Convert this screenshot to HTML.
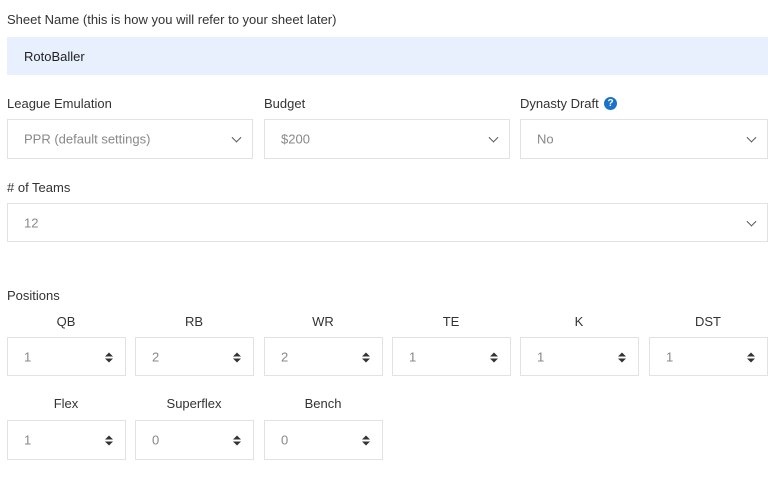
<!DOCTYPE html>
<html><head><style>
body{margin:0;width:768px;height:487px;background:#fff;font-family:"Liberation Sans",sans-serif;font-size:13px;color:#333;position:relative;overflow:hidden}
.a{position:absolute}
.lbl{position:absolute;font-size:13px;color:#333;line-height:15px}
.box{position:absolute;border:1px solid #e2e2e2;box-sizing:border-box;background:#fff;color:#888;font-size:13px}
.box span{position:absolute;left:16px;top:50%;transform:translateY(-50%)}
.chev{position:absolute;right:12px;top:50%;width:6px;height:6px;border-right:1.5px solid #555;border-bottom:1.5px solid #555;transform:translateY(-70%) rotate(45deg)}
.sp{position:absolute;right:12px;top:50%;transform:translateY(-50%);width:8px;height:11px}
.c{text-align:center;width:118px}
</style></head><body>
<div class="lbl" style="left:7px;top:12px">Sheet Name (this is how you will refer to your sheet later)</div>
<div class="a" style="left:7px;top:37px;width:761px;height:38px;background:#e8f0fe"><span class="a" style="left:17px;top:12px;color:#222">RotoBaller</span></div>

<div class="lbl" style="left:7px;top:96px">League Emulation</div>
<div class="lbl" style="left:264px;top:96px">Budget</div>
<div class="lbl" style="left:520px;top:96px;width:100px">Dynasty Draft <span style="position:absolute;left:84px;top:1px;width:13px;height:13px;border-radius:50%;background:#1a73c8;color:#fff;font-size:10px;font-weight:bold;text-align:center;line-height:13px">?</span></div>
<div class="box" style="left:7px;top:119px;width:246px;height:40px"><span>PPR (default settings)</span><i class="chev"></i></div>
<div class="box" style="left:264px;top:119px;width:246px;height:40px"><span>$200</span><i class="chev"></i></div>
<div class="box" style="left:520px;top:119px;width:248px;height:40px"><span>No</span><i class="chev"></i></div>

<div class="lbl" style="left:7px;top:180px"># of Teams</div>
<div class="box" style="left:7px;top:203px;width:761px;height:39px"><span>12</span><i class="chev"></i></div>

<div class="lbl" style="left:7px;top:288px">Positions</div>

<div class="lbl c" style="left:7px;top:314px">QB</div>
<div class="lbl c" style="left:135px;top:314px">RB</div>
<div class="lbl c" style="left:264px;top:314px">WR</div>
<div class="lbl c" style="left:392px;top:314px">TE</div>
<div class="lbl c" style="left:520px;top:314px">K</div>
<div class="lbl c" style="left:649px;top:314px">DST</div>

<div class="lbl c" style="left:7px;top:396px">Flex</div>
<div class="lbl c" style="left:135px;top:396px">Superflex</div>
<div class="lbl c" style="left:264px;top:396px">Bench</div>

<svg width="0" height="0" style="position:absolute"><defs><g id="s"><path d="M0 5L4 1L8 5Z M0 7L4 11L8 7Z" fill="#333"/></g></defs></svg>

<div class="box" style="left:7px;top:337px;width:119px;height:39px"><span>1</span><svg class="sp"><use href="#s"/></svg></div>
<div class="box" style="left:135px;top:337px;width:119px;height:39px"><span>2</span><svg class="sp"><use href="#s"/></svg></div>
<div class="box" style="left:264px;top:337px;width:119px;height:39px"><span>2</span><svg class="sp"><use href="#s"/></svg></div>
<div class="box" style="left:392px;top:337px;width:119px;height:39px"><span>1</span><svg class="sp"><use href="#s"/></svg></div>
<div class="box" style="left:520px;top:337px;width:119px;height:39px"><span>1</span><svg class="sp"><use href="#s"/></svg></div>
<div class="box" style="left:649px;top:337px;width:119px;height:39px"><span>1</span><svg class="sp"><use href="#s"/></svg></div>

<div class="box" style="left:7px;top:420px;width:119px;height:40px"><span>1</span><svg class="sp"><use href="#s"/></svg></div>
<div class="box" style="left:135px;top:420px;width:119px;height:40px"><span>0</span><svg class="sp"><use href="#s"/></svg></div>
<div class="box" style="left:264px;top:420px;width:119px;height:40px"><span>0</span><svg class="sp"><use href="#s"/></svg></div>
</body></html>
